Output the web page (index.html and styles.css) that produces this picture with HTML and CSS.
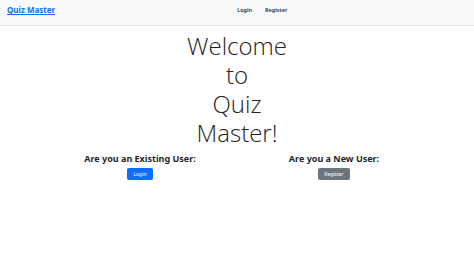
FILE: index.html
```html
<!DOCTYPE html>
<html lang="en">
<head>
  <meta charset="UTF-8" />
  <meta name="viewport" content="width=device-width, initial-scale=1.0" />
  <title>Quiz Master</title>
  <link rel="stylesheet" href="styles.css">
</head>
<body>

  <nav class="navbar">
    <a class="brand" href="#">Quiz Master</a>
    <div class="nav-links">
      <a href="#">Login</a>
      <a href="#">Register</a>
    </div>
  </nav>

  <h1 class="welcome">Welcome<br>to<br>Quiz<br>Master!</h1>

  <div class="choices">
    <div class="choice">
      <h3>Are you an Existing User:</h3>
      <button class="btn btn-primary">Login</button>
    </div>
    <div class="choice">
      <h3>Are you a New User:</h3>
      <button class="btn btn-secondary">Register</button>
    </div>
  </div>

</body>
</html>
```

FILE: styles.css
```css
* {
  box-sizing: border-box;
  margin: 0;
  padding: 0;
}

body {
  font-family: 'Noto Sans', 'Open Sans', sans-serif;
  background: #fff;
  color: #212529;
}

.navbar {
  height: 26px;
  background: #f8f9fa;
  border-bottom: 1px solid #e3e5e8;
  display: flex;
  align-items: flex-start;
  padding: 4px 7px 0;
}

.brand {
  font-size: 8px;
  line-height: 12px;
  font-weight: 700;
  color: #0d6efd;
  text-decoration: underline;
}

.nav-links {
  display: flex;
  gap: 13px;
  margin-left: 182px;
  padding-top: 1px;
}

.nav-links a {
  font-size: 5.5px;
  line-height: 11px;
  font-weight: 600;
  color: #2b2f33;
  text-decoration: none;
}

.welcome {
  margin: 5px auto 0;
  text-align: center;
  font-family: 'Open Sans', sans-serif;
  font-weight: 300;
  font-size: 24px;
  line-height: 29px;
  color: #222;
}

.choices {
  width: 388px;
  margin: 6px auto 0;
  display: grid;
  grid-template-columns: 1fr 1fr;
}

.choice {
  display: flex;
  flex-direction: column;
  align-items: center;
  gap: 3px;
}

.choice h3 {
  font-size: 9px;
  font-weight: 700;
  line-height: 12px;
  color: #212529;
}

.btn {
  border: none;
  border-radius: 2px;
  color: #fff;
  font-family: 'Noto Sans', sans-serif;
  font-size: 5px;
  height: 12px;
  padding: 0 6px;
}

.btn-primary { background: #0d6efd; }
.btn-secondary { background: #6c757d; }
```
